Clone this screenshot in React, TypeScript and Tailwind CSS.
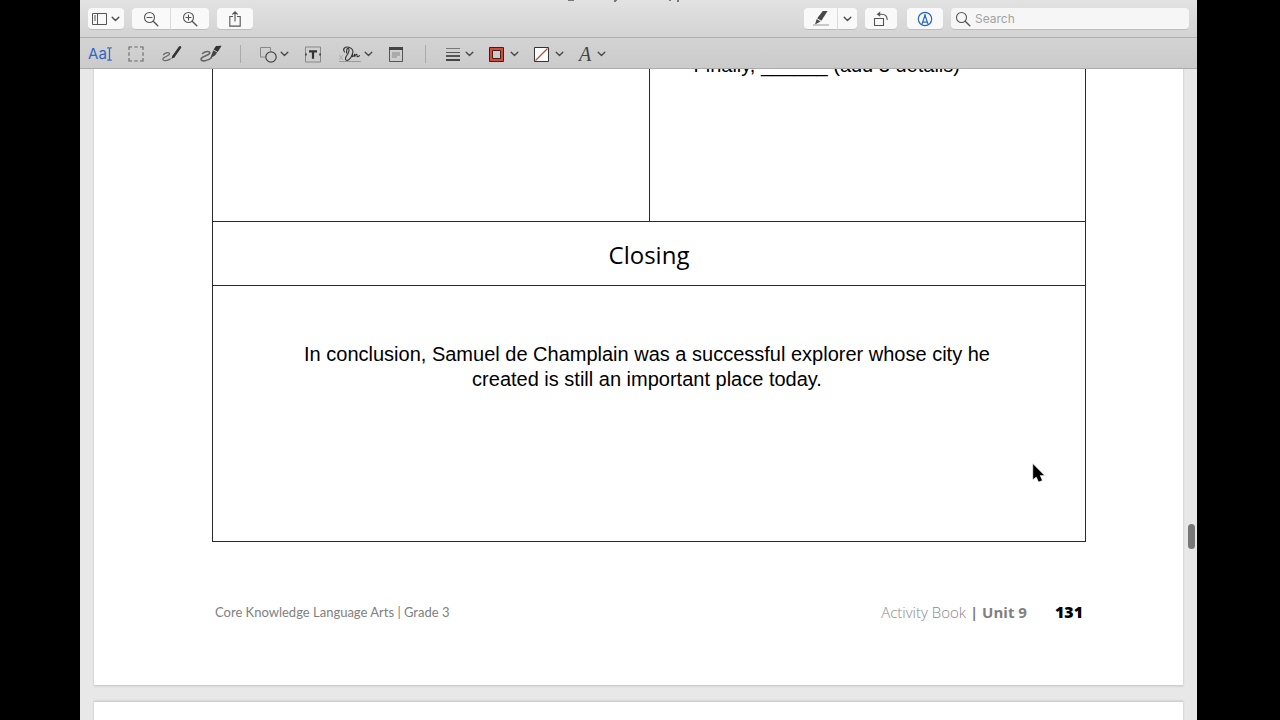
import type { ReactNode } from 'react'

const toolBtn = 'flex h-[22px] items-center justify-center border-b border-[#bdbdbd] bg-[#f9f9f9] text-[#555]'
const markBtn = 'flex h-6 shrink-0 items-center justify-between text-[#444]'

function Chevron() {
  return (
    <svg width="9" height="6" viewBox="0 0 9 6" fill="none" stroke="#4a4a4a" strokeWidth="1.4" strokeLinecap="round" strokeLinejoin="round">
      <path d="M1.2 1.2 4.5 4.4 7.8 1.2" />
    </svg>
  )
}

function Magnifier({ plus = false, bare = false }: { plus?: boolean; bare?: boolean }) {
  return (
    <svg width="16" height="16" viewBox="0 0 16 16" fill="none" stroke="currentColor" strokeWidth="1.1" strokeLinecap="round" className="shrink-0">
      <circle cx="6.5" cy="6.5" r="5" />
      <path d="M10.2 10.2 14.8 14.8" strokeWidth="1.4" />
      {!bare && <path d="M4 6.5h5" />}
      {plus && <path d="M6.5 4v5" />}
    </svg>
  )
}

function Mark({ label, className, menu = false, children }: { label: string; className: string; menu?: boolean; children: ReactNode }) {
  return (
    <button type="button" aria-label={label} className={`${markBtn} ${className}`}>
      {children}
      {menu && <Chevron />}
    </button>
  )
}

function TopBar() {
  return (
    <div className="flex h-[38px] shrink-0 items-center border-b border-[#b0b0b0] bg-linear-to-b from-[#e2e2e2] to-[#d3d3d3] px-2 pt-px">
      <button type="button" aria-label="Sidebar" className={`${toolBtn} w-9 gap-1 rounded`}>
        <svg width="15" height="12" viewBox="0 0 15 12" fill="none" stroke="currentColor">
          <path d="M.5.5h14v11H.5zM5.5.5v11" />
          <path d="M2 3h2M2 5h2M2 7h2" />
        </svg>
        <Chevron />
      </button>
      <div className="ml-2 flex gap-px">
        <button type="button" aria-label="Zoom out" className={`${toolBtn} w-[38px] rounded-l`}><Magnifier /></button>
        <button type="button" aria-label="Zoom in" className={`${toolBtn} w-[38px] rounded-r`}><Magnifier plus /></button>
      </div>
      <button type="button" aria-label="Share" className={`${toolBtn} ml-2 w-9 rounded`}>
        <svg width="12" height="16" viewBox="0 0 12 16" fill="none" stroke="currentColor" strokeWidth="1.1">
          <path d="M4 5.5H.8v9.6h10.4V5.5H8M6 10.5V1M3.4 3.5 6 .9l2.6 2.6" />
        </svg>
      </button>
      <div className="ml-auto flex gap-px">
        <button type="button" aria-label="Highlight" className={`${toolBtn} w-[33px] rounded-l`}>
          <svg width="18" height="15" viewBox="0 0 18 15">
            <path d="M10.8 0h4.8L9.4 9.8 5.2 7.2z" fill="#484848" />
            <path d="m4.7 8 3.8 2.4L3 13.4z" fill="#484848" />
            <path d="M1 14h16" stroke="#999" />
          </svg>
        </button>
        <button type="button" aria-label="Highlight colour" className={`${toolBtn} w-[19px] rounded-r`}><Chevron /></button>
      </div>
      <button type="button" aria-label="Rotate" className={`${toolBtn} ml-2 w-8 rounded`}>
        <svg width="16" height="16" viewBox="0 0 16 16" fill="none" stroke="currentColor" strokeWidth="1.1">
          <path d="M1.5 7.5h9v7h-9z" />
          <path d="M5 3.2h3.6c3.4 0 5.6 2 5.6 5.8" />
          <path d="M7.2.6 3.6 3.2l3.6 2.6z" fill="currentColor" stroke="none" />
        </svg>
      </button>
      <button type="button" aria-label="Markup" className={`${toolBtn} ml-2.5 w-9 rounded text-[#2466c4]`}>
        <svg width="16" height="16" viewBox="0 0 16 16" fill="none" stroke="currentColor" strokeWidth="1.2">
          <circle cx="8" cy="8" r="6.7" />
          <path d="M4.9 13.4 8 4.2l3.1 9.2M5.7 11.2h4.6" />
          <path d="m8 2.6 1.2 4H6.8z" fill="currentColor" stroke="none" />
        </svg>
      </button>
      <label className="ml-2 flex h-[22px] w-[238px] items-center gap-1 rounded border-b border-[#bdbdbd] bg-[#f6f6f6] pl-1 text-[#555]">
        <Magnifier bare />
        <input type="search" aria-label="Search" placeholder="Search" className="w-full min-w-0 bg-transparent font-['Inter',sans-serif] text-[12px] leading-4 outline-none placeholder:text-[#a3a3a3]" />
      </label>
    </div>
  )
}

function MarkupBar() {
  return (
    <div className="flex h-[31px] shrink-0 items-center border-b border-[#acacac] bg-linear-to-b from-[#d3d3d3] to-[#cbcbcb] pt-0.5 pl-2">
      <div className="flex gap-4">
        <button type="button" aria-label="Text selection" className="flex h-6 w-6 shrink-0 items-center justify-center text-[#2f68c5]">
          <span className="font-['Inter',sans-serif] text-[15px] leading-5">Aa</span>
          <svg width="5" height="14" viewBox="0 0 5 14" fill="none" stroke="currentColor" strokeWidth="1.2" className="shrink-0"><path d="M.3.8h1.4l.8.6.8-.6h1.4M.3 13.2h1.4l.8-.6.8.6h1.4M2.5 1.2v11.6" /></svg>
        </button>
        <Mark label="Rectangular selection" className="w-4">
          <svg width="16" height="16" viewBox="0 0 16 16" fill="none" stroke="#666" strokeWidth="1.1">
            <path d="M1 4V1h3M12 1h3v3M15 12v3h-3M4 15H1v-3M6.3 1h3.4M6.3 15h3.4M1 6.3v3.4M15 6.3v3.4" />
          </svg>
        </Mark>
        <Mark label="Sketch" className="w-[22px]">
          <svg width="22" height="18" viewBox="0 0 22 18" fill="none" strokeLinecap="round">
            <path d="M3.5 9.5C6 7.2 10 7 9.5 9.2 9 11.3 2.4 12 2.8 14.3c.4 2 4.8 1.6 7.4-.4" stroke="#666" strokeWidth="1.2" />
            <path d="M20 2.3 13.5 11.5" stroke="#333" strokeWidth="2.6" />
            <path d="m12.5 10.6 1.9 1.5-3 1.9z" fill="#333" />
          </svg>
        </Mark>
        <Mark label="Draw" className="w-6">
          <svg width="24" height="18" viewBox="0 0 24 18" fill="none" strokeLinecap="round">
            <path d="M4.5 8.5C7.5 5.6 13 6 11.5 8.5 10 11 2.5 11.5 3 14.5c.5 2.3 7 1.6 10.5-1.8" stroke="#666" strokeWidth="1.6" />
            <path d="m18 1 5.6-.3-3.9 6.3-4-2.5z" fill="#333" />
            <path d="m15.3 5.2 3.8 2.4-2.1 2.8-4.6 2.6z" fill="#444" />
          </svg>
        </Mark>
      </div>
      <span className="mx-[18px] h-[18px] w-px bg-[#ababab]" />
      <div className="flex gap-4">
        <Mark label="Shapes" className="w-[30px]" menu>
          <svg width="18" height="17" viewBox="0 0 18 17" fill="none">
            <path d="M6 11H1.5V1.5h10V5" stroke="#888" />
            <circle cx="12" cy="11" r="5.2" stroke="#444" strokeWidth="1.2" />
          </svg>
        </Mark>
        <Mark label="Text" className="w-4">
          <svg width="16" height="17" viewBox="0 0 16 17" fill="none">
            <path d="M.5 1h15v15H.5z" stroke="#888" />
            <path d="M4 5.3h8M8 5.3v7.4" stroke="#333" strokeWidth="2.2" />
            <path d="M0 7.5h1.8v2H0zM14.2 7.5H16v2h-1.8z" fill="#444" />
          </svg>
        </Mark>
        <Mark label="Sign" className="w-9" menu>
          <svg width="24" height="18" viewBox="0 0 24 18" fill="none" strokeLinecap="round">
            <path d="m2.5 10.5 3 4m0-4-3 4" stroke="#aaa" />
            <path d="M2.5 16.5h21" stroke="#999" />
            <path d="M7.5 7C5 3.5 8.5 1.5 11.8 2.2c4.2.9 5 4.3 3.4 7.8-1.4 3-4 5.8-6 5.2-1.8-.8-.3-3.7 1.3-6C12 7 12.6 4 11.4 3.4c-1.4-.5-2 2-1.8 4.6" stroke="#333" strokeWidth="1.1" />
            <path d="M15.4 9.4c-.6 1.6-.2 2.6.8 2 .7-.5 1.1-1.5 1.4-2.6l.1 3c.7-1.6 1.4-2.7 2-2.5.6.3-.1 2.2.7 2.3.8.1 1.4-.5 2.2-1" stroke="#333" strokeWidth="1.1" />
          </svg>
        </Mark>
        <Mark label="Note" className="w-[14px]">
          <svg width="14" height="15" viewBox="0 0 14 15" fill="none">
            <path d="M.5.5h13v14H.5z" stroke="#555" />
            <path d="M0 0h14v3H0z" fill="#444" />
            <path d="M3 6h8M3 8h8M3 10h5" stroke="#888" strokeWidth="1.2" />
          </svg>
        </Mark>
      </div>
      <span className="mr-5 ml-[22px] h-[18px] w-px bg-[#ababab]" />
      <div className="flex gap-[15px]">
        <Mark label="Shape style" className="w-7" menu>
          <svg width="14" height="14" viewBox="0 0 14 14">
            <path d="M0 1h14v1H0z" fill="#777" />
            <path d="M0 5h14v1H0z" fill="#555" />
            <path d="M0 8h14v2H0z" fill="#555" />
            <path d="M0 12h14v2H0z" fill="#444" />
          </svg>
        </Mark>
        <Mark label="Border colour" className="w-[30px]" menu>
          <svg width="15" height="15" viewBox="0 0 15 15" fill="none">
            <path d="M.5.5h14v14H.5z" fill="#d34b3b" stroke="#3b2220" />
            <path d="M3.5 3.5h8v8h-8z" fill="#d2c8c6" stroke="#3b2220" />
          </svg>
        </Mark>
        <Mark label="Fill colour" className="w-[30px]" menu>
          <svg width="15" height="15" viewBox="0 0 15 15" fill="none">
            <path d="M.5.5h14v14H.5z" fill="#fff" stroke="#333" />
            <path d="M1.5 13.5 13.5 1.5" stroke="#c4473c" strokeWidth="1.2" />
          </svg>
        </Mark>
        <Mark label="Text style" className="w-[27px]" menu>
          <span className="font-['Liberation_Serif',serif] text-[20px] leading-6 italic">A</span>
        </Mark>
      </div>
    </div>
  )
}

function Organizer() {
  const cell = 'border border-[#2a2a2a] p-0'
  return (
    <table className="w-full table-fixed border-collapse border border-[#2a2a2a] font-['Liberation_Sans',sans-serif] text-[20px] leading-[25px] text-black">
      <tbody>
        <tr className="h-[169px]">
          <td className={cell} />
          <td className={`${cell} pl-11 align-top`}>Finally, ______ (add 3 details)</td>
        </tr>
        <tr className="h-16">
          <th colSpan={2} className={`${cell} pt-0.5 font-['Open_Sans',sans-serif] text-[24px] leading-8 font-normal`}>Closing</th>
        </tr>
        <tr className="h-64">
          <td colSpan={2} className={`${cell} relative pt-14 pr-[82px] pl-[78px] text-center align-top`}>
            <p>In conclusion, Samuel de Champlain was a successful explorer whose city he<br />created is still an important place today.</p>
            <svg width="13" height="20" viewBox="0 0 13 20" className="absolute right-10 bottom-[58px]">
              <path d="M.8.6v16.2l3.4-2.8 2.4 5 3.8-1.5-2.2-4.9h4.5z" fill="#000" stroke="#fff" strokeWidth=".5" />
            </svg>
          </td>
        </tr>
      </tbody>
    </table>
  )
}

export default function App() {
  return (
    <div className="h-screen overflow-hidden bg-black pr-[83px] pl-20">
      <div className="relative flex h-full flex-col bg-[#e8e8e8]">
        {/* lower edge of the window title */}
        <svg width="120" height="2" viewBox="0 0 120 2" fill="#777" className="absolute top-0 left-[488px]">
          <path d="M0 0h6v1H0zM46 0h3v1h-1v1h-2zM101 0h2v1h-2zM109 0h2v2h-2z" />
        </svg>
        <TopBar />
        <MarkupBar />
        <main className="relative min-h-0 flex-1 overflow-hidden px-3.5">
          <article className="-mt-[17px] border-b border-[#cfcfcf] bg-white pr-[97px] pb-[61px] pl-[118px] shadow-[0_0_2px_#bbb]">
            <Organizer />
            <footer className="mt-[58px] flex items-center justify-between px-[3px] leading-6">
              <span className="font-['Lato',sans-serif] text-[13px] text-[#808080]">Core Knowledge Language Arts | Grade 3</span>
              <span className="flex gap-7 font-['Open_Sans',sans-serif] text-[15px]">
                <span className="font-light text-[#888]">Activity Book <b className="font-bold text-[#808080]">| Unit 9</b></span>
                <b className="text-[16px] font-extrabold text-black">131</b>
              </span>
            </footer>
          </article>
          <article className="mt-[15px] h-40 border-t border-[#cfcfcf] bg-white shadow-[0_0_2px_#bbb]" />
          <div className="absolute top-[455px] right-0.5 h-[25px] w-[7px] rounded-full bg-[#777]" />
        </main>
      </div>
    </div>
  )
}
